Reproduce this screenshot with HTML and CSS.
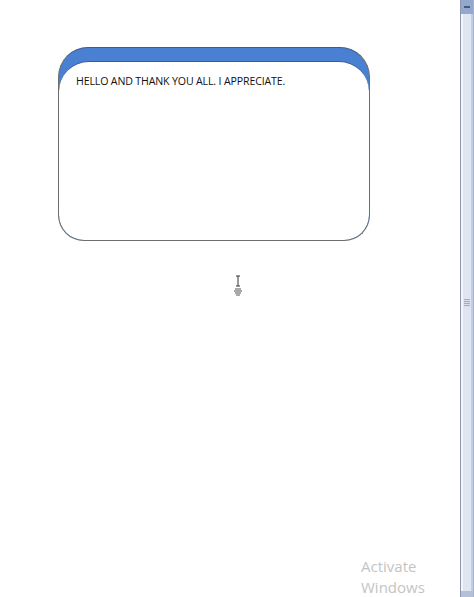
FILE: index.html
```html
<!DOCTYPE html>
<html lang="en">
<head>
    <meta charset="UTF-8">
    <meta name="viewport" content="width=device-width, initial-scale=1.0">
    <title>Note</title>
    <link rel="stylesheet" href="styles.css">
</head>
<body>
    <div class="page">
        <div class="shape">
            <div class="shape-body">
                <p class="note">HELLO AND THANK YOU ALL. I APPRECIATE.</p>
            </div>
        </div>

        <svg class="cursor" width="10" height="22" viewBox="0 0 10 22">
            <path d="M3 1h4M5 1v10M3 11h4" stroke="#333" stroke-width="1" fill="none"/>
            <path d="M2 14h6M1 16h8M2 18h6M3 20h4" stroke="#555" stroke-width="1.2" fill="none"/>
        </svg>

        <div class="watermark">Activate<br>Windows</div>
    </div>
    <div class="scrollbar">
        <div class="scroll-btn"><span></span></div>
        <div class="scroll-track">
            <div class="scroll-grip"></div>
        </div>
        <div class="scroll-btn bottom"></div>
    </div>
</body>
</html>
```

FILE: styles.css
```css
body {
    margin: 0;
    display: flex;
    height: 597px;
    overflow: hidden;
    background: #fff;
    font-family: "Open Sans", Arial, sans-serif;
}

.page {
    flex: 1;
    position: relative;
    padding: 47px 0 0 58px;
}

.shape {
    box-sizing: border-box;
    width: 312px;
    height: 194px;
    background: #4a80d2;
    border: 1px solid #6e6e6e;
    border-top-color: #3c5c8e;
    border-radius: 30px 30px 26px 26px;
    overflow: hidden;
}

.shape-body {
    box-sizing: border-box;
    height: 179px;
    margin-top: 13px;
    background: #fff;
    border-top: 1px solid #3c5c8e;
    border-radius: 30px 30px 25px 25px;
    padding: 12px 17px;
}

.note {
    margin: 0;
    font-size: 10.6px;
    line-height: 14px;
    font-weight: 500;
    color: #111;
    letter-spacing: -0.15px;
}

.cursor {
    position: absolute;
    left: 233px;
    top: 275px;
}

.watermark {
    position: absolute;
    left: 361px;
    top: 556px;
    font-size: 15px;
    line-height: 21px;
    color: #c4c4c4;
    font-family: "Open Sans", sans-serif;
}

.scrollbar {
    width: 12px;
    display: flex;
    flex-direction: column;
    border-left: 1px solid #8b97b0;
    border-right: 1px solid #a7b3cc;
    background: #dfe5f1;
}

.scroll-btn {
    height: 14px;
    background: #93a8cc;
    display: flex;
    align-items: center;
    justify-content: center;
}

.scroll-btn span {
    width: 6px;
    height: 2px;
    background: #4a5a7a;
}

.scroll-btn.bottom {
    height: 6px;
    background: #b4c0d8;
}

.scroll-track {
    flex: 1;
    display: flex;
    align-items: center;
    justify-content: center;
    border-left: 2px solid #f4f6fb;
    border-right: 2px solid #c3cce0;
}

.scroll-grip {
    width: 6px;
    height: 8px;
    background: repeating-linear-gradient(#aab 0 1px, #dde 1px 2px);
}
```
